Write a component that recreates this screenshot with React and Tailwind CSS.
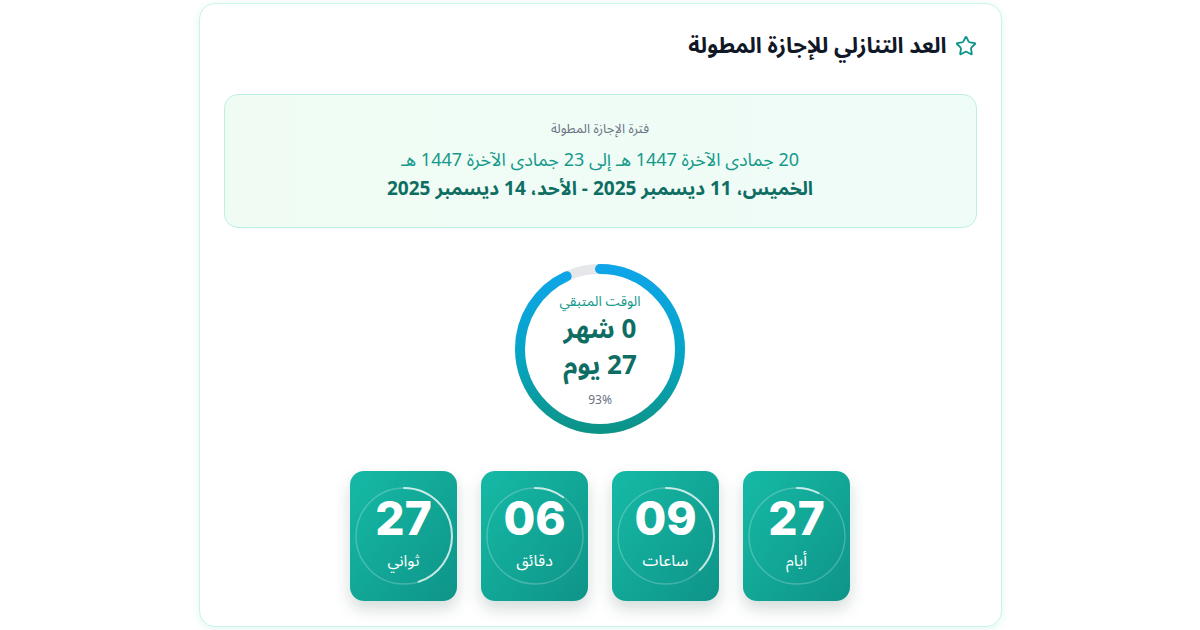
import React from "react";
import { Star } from "lucide-react";

const units = [
  { value: "27", label: "أيام", progress: 27 / 365 },
  { value: "09", label: "ساعات", progress: 9 / 24 },
  { value: "06", label: "دقائق", progress: 6 / 60 },
  { value: "27", label: "ثواني", progress: 27 / 60 },
];

const font = { fontFamily: '"Noto Sans Arabic", "Noto Sans", "DejaVu Sans", sans-serif' };

const RemainingRing = ({ percent }) => {
  const r = 80;
  const c = 2 * Math.PI * r;
  return (
    <div className="relative w-[176px] h-[176px]">
      <svg width="176" height="176" viewBox="0 0 176 176" className="absolute inset-0">
        <defs>
          <linearGradient id="ringGrad" x1="1" y1="0" x2="0" y2="0">
            <stop offset="0%" stopColor="#0ea5e9" />
            <stop offset="55%" stopColor="#06a5c4" />
            <stop offset="100%" stopColor="#0d9488" />
          </linearGradient>
        </defs>
        <circle cx="88" cy="88" r={r} fill="none" stroke="#e5e7eb" strokeWidth="10" />
        <circle
          cx="88"
          cy="88"
          r={r}
          fill="none"
          stroke="url(#ringGrad)"
          strokeWidth="10"
          strokeLinecap="round"
          strokeDasharray={`${(c * percent) / 100} ${c}`}
          transform="rotate(-90 88 88)"
        />
      </svg>
      <div className="absolute inset-0 pt-[3px] flex flex-col items-center justify-center">
        <span className="text-[14px] leading-5 text-[#14998a]">الوقت المتبقي</span>
        <span className="text-[26px] leading-[36px] font-bold text-[#0f6e63]">0 شهر</span>
        <span className="text-[26px] leading-[36px] font-bold text-[#0f6e63]">27 يوم</span>
        <span className="text-[12px] leading-4 text-gray-500 mt-[9px]">{percent}%</span>
      </div>
    </div>
  );
};

const UnitBox = ({ value, label, progress }) => {
  const r = 48;
  const c = 2 * Math.PI * r;
  return (
    <div className="relative w-[107px] h-[130px] rounded-[14px] bg-gradient-to-br from-[#16baa6] to-[#0e9488] shadow-[0_8px_16px_rgba(15,60,55,0.18)] flex flex-col items-center justify-center">
      <svg width="100" height="100" viewBox="0 0 100 100" className="absolute left-1/2 top-1/2 -translate-x-1/2 -translate-y-1/2">
        <circle cx="50" cy="50" r={r} fill="none" stroke="rgba(255,255,255,0.22)" strokeWidth="1.5" />
        <circle
          cx="50"
          cy="50"
          r={r}
          fill="none"
          stroke="rgba(255,255,255,0.7)"
          strokeWidth="2"
          strokeLinecap="round"
          strokeDasharray={`${c * progress} ${c}`}
          transform="rotate(-90 50 50)"
        />
      </svg>
      <span className="relative font-['Inter',sans-serif] text-[46px] leading-none font-extrabold text-white mt-[-6px]">{value}</span>
      <span className="relative text-[16px] leading-5 text-white mt-[10px]">{label}</span>
    </div>
  );
};

export default function App() {
  return (
    <div dir="rtl" className="w-[1200px] h-[630px] bg-white pt-[3px]" style={font}>
      <div className="mx-auto w-[803px] rounded-2xl border border-[#c9f4ea] bg-white shadow-[0_2px_8px_rgba(20,184,166,0.12)] px-6 pt-6 pb-[25px]">
        <div className="flex items-center gap-2 h-[36px]">
          <Star size={22} strokeWidth={2} className="text-[#0d9488]" />
          <h2 className="text-[22px] font-bold text-gray-900">العد التنازلي للإجازة المطولة</h2>
        </div>

        <div className="mt-[30px] rounded-[14px] border border-[#bdf0e3] bg-gradient-to-l from-[#effcf8] to-[#f0fcf3] pt-6 pb-6 flex flex-col items-center">
          <p className="text-[13px] leading-5 text-gray-500">فترة الإجازة المطولة</p>
          <p className="mt-[8px] text-[18px] leading-[26px] text-[#14998a]">20 جمادى الآخرة 1447 هـ إلى 23 جمادى الآخرة 1447 هـ</p>
          <p className="mt-[2px] text-[19px] leading-[28px] font-bold text-[#0f6e63]">الخميس، 11 ديسمبر 2025 - الأحد، 14 ديسمبر 2025</p>
        </div>

        <div className="mt-[33px] flex justify-center">
          <RemainingRing percent={93} />
        </div>

        <div className="mt-[34px] flex justify-center gap-6">
          {units.map((u, i) => (
            <UnitBox key={i} {...u} />
          ))}
        </div>
      </div>
    </div>
  );
}
